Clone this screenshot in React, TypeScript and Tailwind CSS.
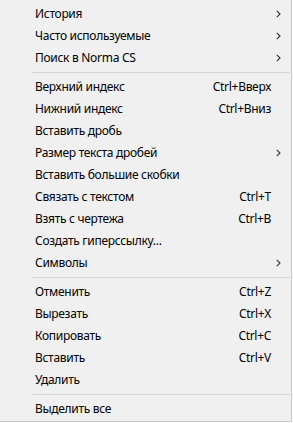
import React from "react";

type Item =
  | { type: "item"; label: string; shortcut?: string; sub?: boolean }
  | { type: "sep" };

const items: Item[] = [
  { type: "item", label: "История", sub: true },
  { type: "item", label: "Часто используемые", sub: true },
  { type: "item", label: "Поиск в Norma CS", sub: true },
  { type: "sep" },
  { type: "item", label: "Верхний индекс", shortcut: "Ctrl+Вверх" },
  { type: "item", label: "Нижний индекс", shortcut: "Ctrl+Вниз" },
  { type: "item", label: "Вставить дробь" },
  { type: "item", label: "Размер текста дробей", sub: true },
  { type: "item", label: "Вставить большие скобки" },
  { type: "item", label: "Связать с текстом", shortcut: "Ctrl+T" },
  { type: "item", label: "Взять с чертежа", shortcut: "Ctrl+B" },
  { type: "item", label: "Создать гиперссылку..." },
  { type: "item", label: "Символы", sub: true },
  { type: "sep" },
  { type: "item", label: "Отменить", shortcut: "Ctrl+Z" },
  { type: "item", label: "Вырезать", shortcut: "Ctrl+X" },
  { type: "item", label: "Копировать", shortcut: "Ctrl+C" },
  { type: "item", label: "Вставить", shortcut: "Ctrl+V" },
  { type: "item", label: "Удалить" },
  { type: "sep" },
  { type: "item", label: "Выделить все" },
];

function Chevron() {
  return (
    <svg width="5" height="8" viewBox="0 0 5 8" className="block">
      <path d="M0.8 0.8 L4 4 L0.8 7.2" fill="none" stroke="#333" strokeWidth="1.1" />
    </svg>
  );
}

export default function App() {
  return (
    <div className="w-[293px] h-[423px] bg-white">
      <div
        className="w-[292px] h-[422px] bg-[#f0f0f0] border-r border-b border-[#c8c8c8] pt-[3px] text-[12px] text-black tracking-[-0.3px]"
        style={{ fontFamily: '"Noto Sans", "Segoe UI", sans-serif' }}
      >
        {items.map((it, i) =>
          it.type === "sep" ? (
            <div key={i} className="h-[7px] flex items-center pl-[31px] pr-[1px]">
              <div className="h-px w-full bg-[#d7d7d7]" />
            </div>
          ) : (
            <div key={i} className="h-[22px] flex items-center pl-[35px] pr-[10px]">
              <span className="flex-1 whitespace-nowrap leading-none">{it.label}</span>
              {it.shortcut && (
                <span className="whitespace-nowrap leading-none mr-[10px]">{it.shortcut}</span>
              )}
              {it.sub && <Chevron />}
            </div>
          )
        )}
      </div>
    </div>
  );
}
